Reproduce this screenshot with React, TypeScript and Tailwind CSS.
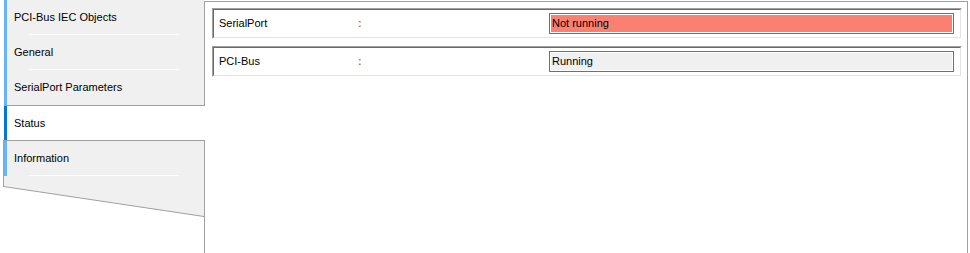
const TOP_TABS = ['PCI-Bus IEC Objects', 'General', 'SerialPort Parameters'];

const ROWS = [
    { label: 'SerialPort', value: 'Not running', ok: false },
    { label: 'PCI-Bus', value: 'Running', ok: true },
];

function Tab({ label, separator }: { label: string; separator: boolean }) {
    return (
        <div className="flex h-[35px]">
            <div className="w-[3px] bg-[#66b5f6]" />
            <div className="flex flex-1 flex-col">
                <div className="flex flex-1 items-center pl-[7px]">{label}</div>
                {separator && <div className="ml-[22px] h-px w-[150px] bg-white" />}
            </div>
        </div>
    );
}

function StatusRow({ label, value, ok }: { label: string; value: string; ok: boolean }) {
    return (
        <div className="border-t border-l border-r border-b border-t-[#a0a0a0] border-l-[#a0a0a0] border-r-white border-b-white">
            <div className="flex h-[29px] items-center border-t border-l border-r border-b border-t-[#696969] border-l-[#696969] border-r-[#e3e3e3] border-b-[#e3e3e3]">
                <div className="w-[144px] pl-[5px]">{label}</div>
                <div className="w-[191px] font-bold text-[#c07a00]">:</div>
                <div className="mr-[6px] flex-1 border border-[#707070] bg-white p-px">
                    <div className={`flex h-[17px] items-center ${ok ? 'bg-[#f0f0f0]' : 'bg-[#fa8072]'}`}>
                        <span className="pl-px">{value}</span>
                    </div>
                </div>
            </div>
        </div>
    );
}

export default function App() {
    return (
        <div className="flex h-[253px] w-[970px] overflow-hidden bg-white font-['Liberation_Sans',Arial,sans-serif] text-[11px] text-black">
            {/* left tab strip */}
            <div className="flex w-[204px] shrink-0 flex-col">
                <div className="ml-[4px] border-b border-[#a0a0a0] bg-[#f0f0f0]">
                    {TOP_TABS.map((t, i) => (
                        <Tab key={t} label={t} separator={i < TOP_TABS.length - 1} />
                    ))}
                </div>
                <div className="relative z-10 -mr-px flex h-[34px] bg-white pl-[4px]">
                    <div className="w-[3px] bg-[#0078d7]" />
                    <div className="flex items-center pl-[7px]">Status</div>
                </div>
                <div className="ml-[3px] border-t border-l border-[#a0a0a0] bg-[#f0f0f0]">
                    <Tab label="Information" separator />
                    <div className="h-[10px]" />
                </div>
                <svg className="ml-[3px]" width="201" height="32" viewBox="0 0 201 32">
                    <polygon points="0,0 201,0 201,31 0,0" fill="#f0f0f0" />
                    <line x1="0.5" y1="0" x2="0.5" y2="1" stroke="#a0a0a0" />
                    <line x1="0.5" y1="0.5" x2="201" y2="30.5" stroke="#a0a0a0" />
                </svg>
            </div>

            {/* status panel */}
            <div className="mt-px flex h-[252px] w-[764px] shrink-0 flex-col gap-[7px] border-t border-l border-r border-[#a0a0a0] pt-[6px] pl-[7px] pr-[5px]">
                {ROWS.map((r) => (
                    <StatusRow key={r.label} {...r} />
                ))}
            </div>
        </div>
    );
}
